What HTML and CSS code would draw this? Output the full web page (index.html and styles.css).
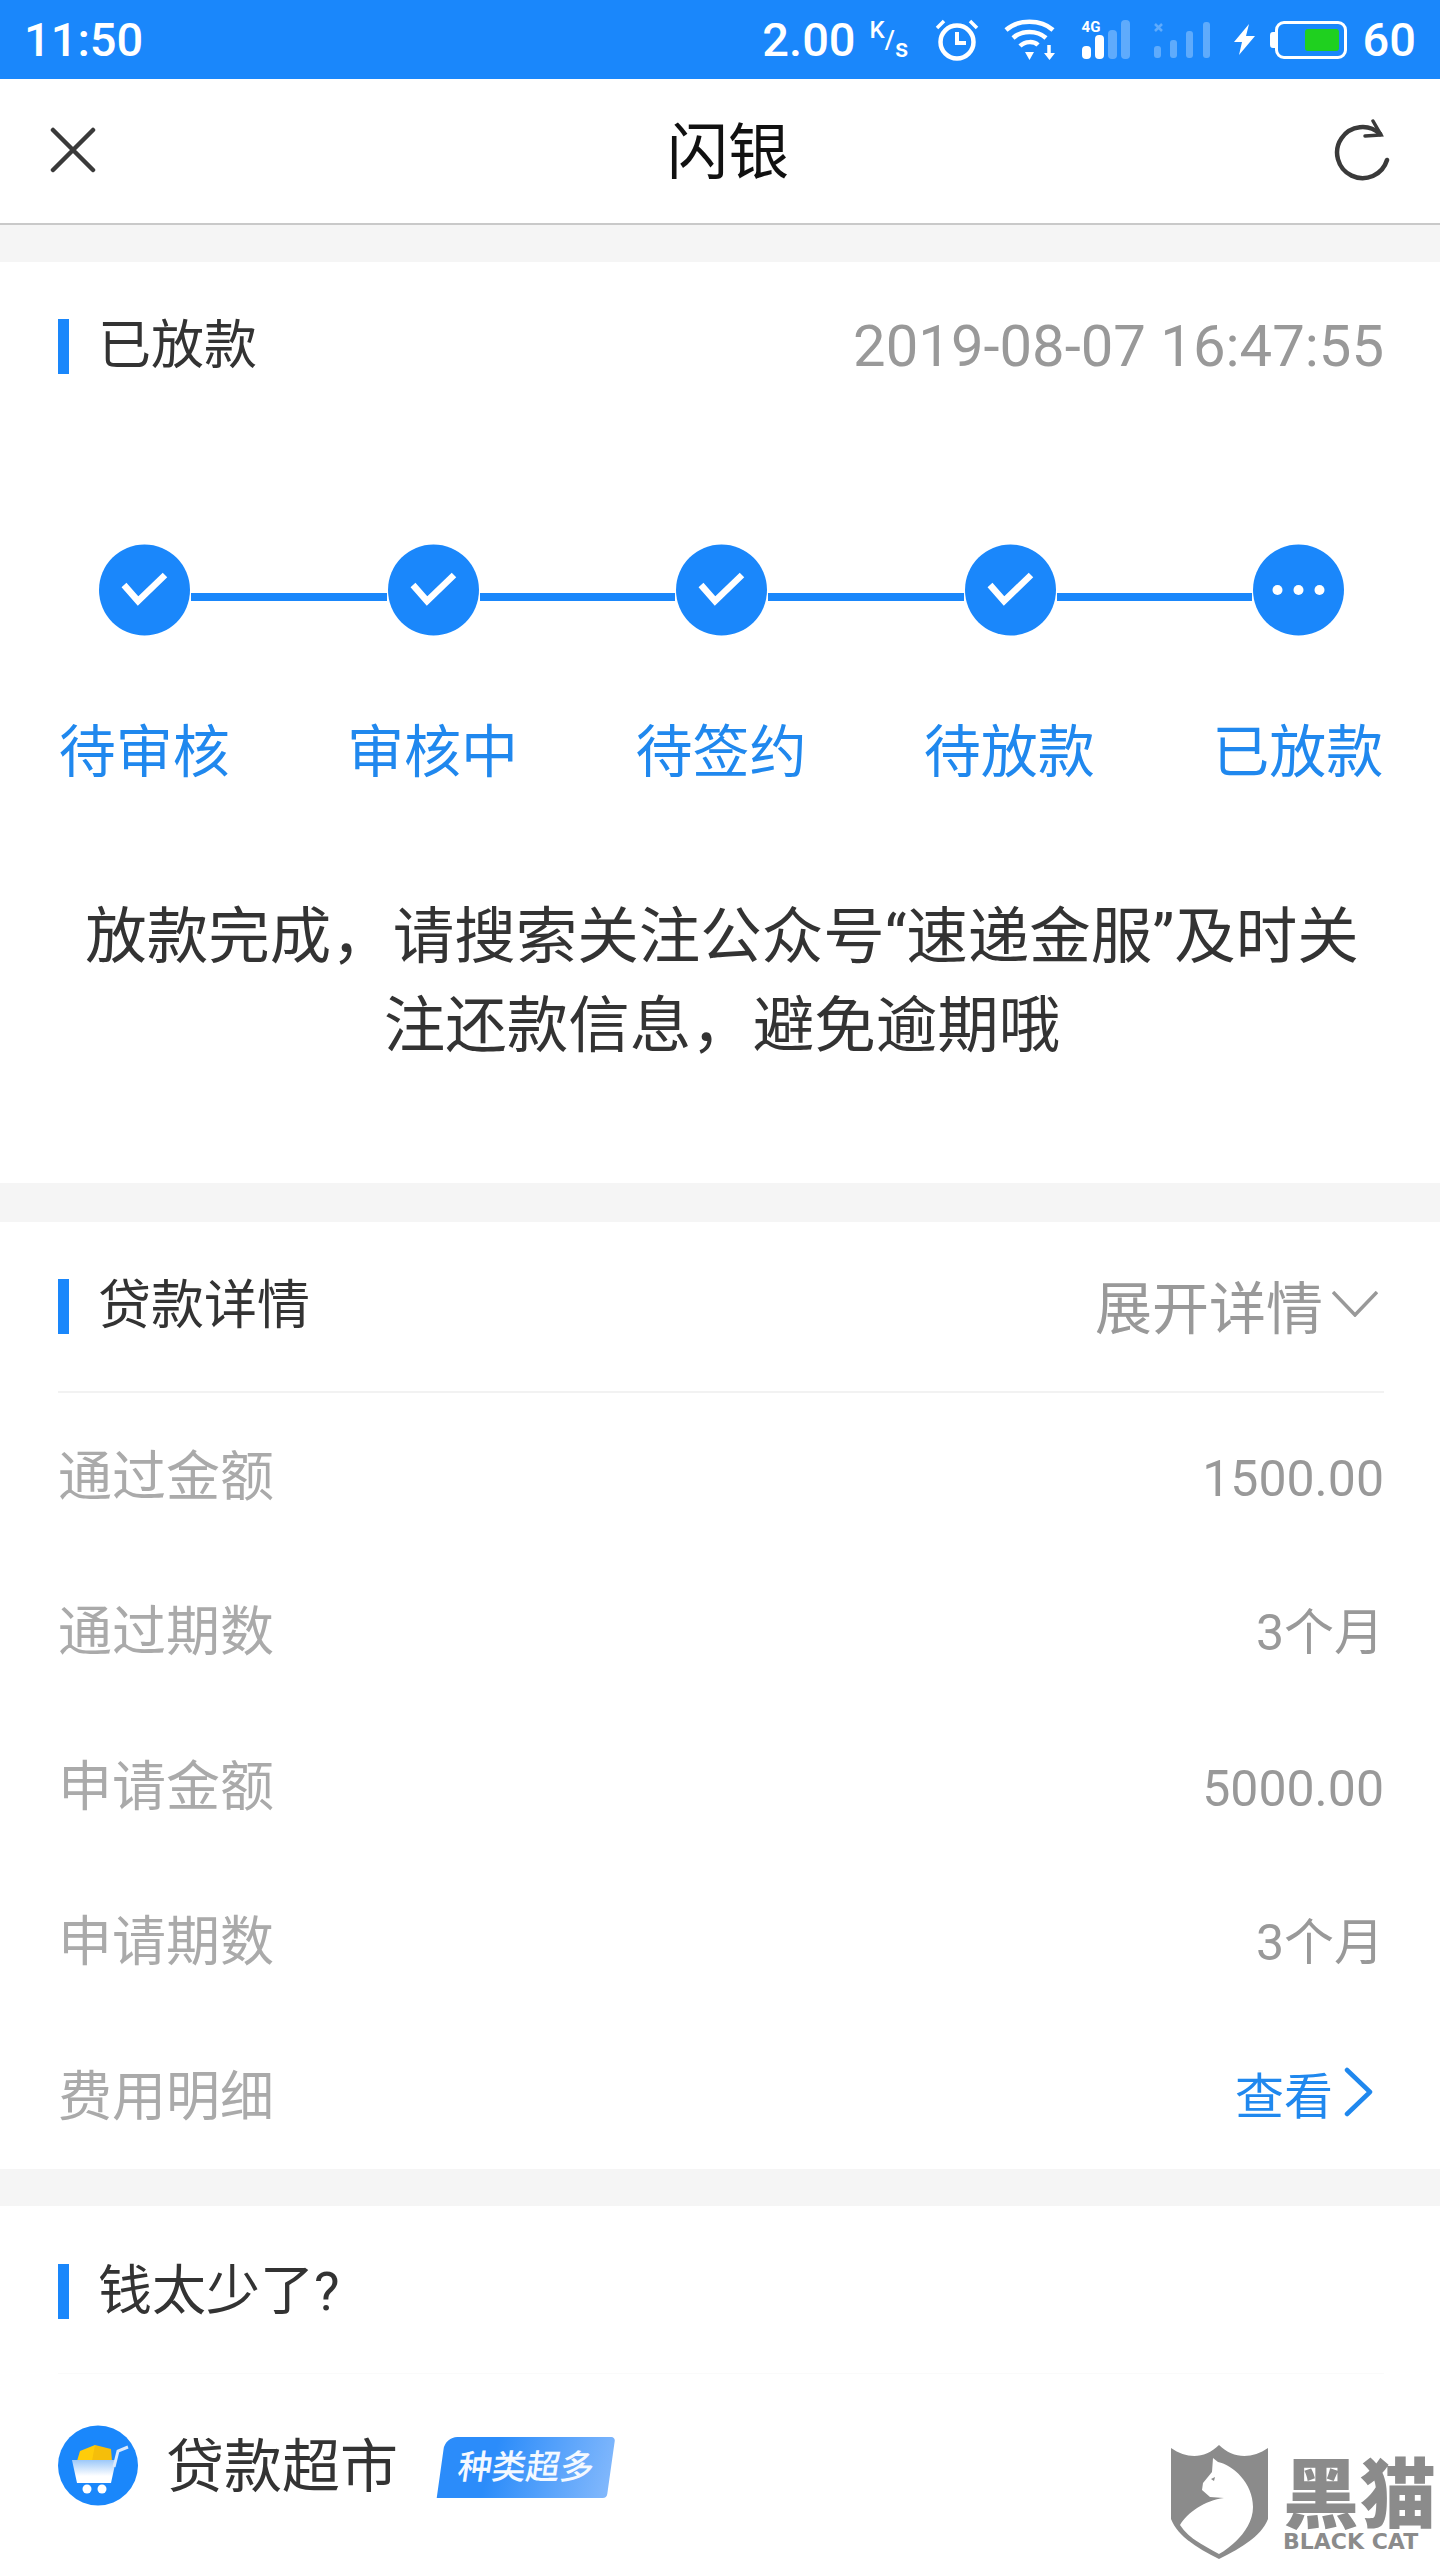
FILE: index.html
```html
<!DOCTYPE html>
<html lang="zh-CN">
<head>
  <meta charset="UTF-8">
  <meta name="viewport" content="width=device-width, initial-scale=1.0">
  <title>闪银</title>
  <link rel="stylesheet" href="styles.css">
</head>
<body>
  <div class="page">
    <!-- Status bar -->
    <div class="status-bar">
      <span class="clock">11:50</span>
      <div class="status-icons">
        <span class="speed">2.00</span>
        <span class="speed-unit"><sup>K</sup>/<sub>s</sub></span>
        <svg class="ic-alarm" width="44" height="42" viewBox="0 0 44 42" fill="none" stroke="#fff">
          <circle cx="22" cy="23" r="16.5" stroke-width="4.5"/>
          <path d="M22 13v11h9" stroke-width="4"/>
          <path d="M2 9 9 2M42 9 35 2" stroke-width="3.5"/>
        </svg>
        <svg class="ic-wifi" width="53" height="42" viewBox="0 0 53 42" fill="none" stroke="#fff" stroke-width="4.5">
          <path d="M2 11C14 0 37 0 49 11"/>
          <path d="M9 19C18 11 33 11 42 19"/>
          <path d="M16 27C21 22 30 22 34 26"/>
          <path d="M21 33h9l-4.5 8z" fill="#fff" stroke="none"/>
          <path d="M45 26v10" stroke-width="3.5"/>
          <path d="M40 34h11l-5.500 7z" fill="#fff" stroke="none"/>
        </svg>
        <div class="signal">
          <span class="net-label">4G</span>
          <i class="bar bar-dot"></i>
          <i class="bar bar-on"></i>
          <i class="bar bar-off bar-a"></i>
          <i class="bar bar-off bar-b"></i>
        </div>
        <svg class="ic-signal2" width="56" height="36" viewBox="0 0 56 36" fill="#fff" fill-opacity="0.3">
          <rect x="0" y="24" width="7" height="12" rx="3"/>
          <rect x="16" y="18" width="7" height="18" rx="3"/>
          <rect x="32" y="9" width="7" height="27" rx="3"/>
          <rect x="49" y="0" width="7" height="36" rx="3"/>
          <path d="M1 2 8 9M8 2 1 9" stroke="#fff" stroke-opacity="0.3" stroke-width="2.5"/>
        </svg>
        <svg class="ic-bolt" width="21" height="31" viewBox="0 0 21 31" fill="#fff">
          <path d="M15 0 0 18h8L5 31 21 12h-9z"/>
        </svg>
        <div class="battery"><div class="battery-fill"></div></div>
        <span class="battery-num">60</span>
      </div>
    </div>

    <!-- Nav bar -->
    <div class="nav-bar">
      <svg class="nav-close" width="46" height="46" viewBox="0 0 46 46" fill="none" stroke="#3a3a3a" stroke-width="4.5" stroke-linecap="round">
        <path d="M3 3 43 43M43 3 3 43"/>
      </svg>
      <div class="nav-title">闪银</div>
      <svg class="nav-refresh" width="56" height="62" viewBox="0 0 56 62" fill="none" stroke="#3a3a3a" stroke-width="4.5" stroke-linecap="round">
        <path d="M53 41A25.500 25.500 0 1 1 46 15"/>
        <path d="M39 2 47 16 31 17" stroke-width="3.5"/>
      </svg>
    </div>

    <div class="gap"></div>

    <!-- Progress -->
    <section class="card card-status">
      <div class="card-head">
        <h2 class="head-title">已放款</h2>
        <span class="head-date">2019-08-07 16:47:55</span>
      </div>
      <div class="track">
        <svg class="dot" viewBox="0 0 91 92"><circle cx="45.5" cy="46" r="45.5" fill="#1a87fb"/><path d="M25 41 39 57 66 31" fill="none" stroke="#fff" stroke-width="6.5"/></svg>
        <div class="track-line"></div>
        <svg class="dot" viewBox="0 0 91 92"><circle cx="45.5" cy="46" r="45.5" fill="#1a87fb"/><path d="M25 41 39 57 66 31" fill="none" stroke="#fff" stroke-width="6.5"/></svg>
        <div class="track-line"></div>
        <svg class="dot" viewBox="0 0 91 92"><circle cx="45.5" cy="46" r="45.5" fill="#1a87fb"/><path d="M25 41 39 57 66 31" fill="none" stroke="#fff" stroke-width="6.5"/></svg>
        <div class="track-line"></div>
        <svg class="dot" viewBox="0 0 91 92"><circle cx="45.5" cy="46" r="45.5" fill="#1a87fb"/><path d="M25 41 39 57 66 31" fill="none" stroke="#fff" stroke-width="6.5"/></svg>
        <div class="track-line"></div>
        <svg class="dot" viewBox="0 0 91 92"><circle cx="45.5" cy="46" r="45.5" fill="#1a87fb"/><circle cx="24.5" cy="46" r="5" fill="#fff"/><circle cx="45.5" cy="46" r="5" fill="#fff"/><circle cx="66.5" cy="46" r="5" fill="#fff"/></svg>
      </div>
      <div class="step-labels">
        <span>待审核</span>
        <span>审核中</span>
        <span>待签约</span>
        <span>待放款</span>
        <span>已放款</span>
      </div>
      <p class="status-msg">放款完成，请搜索关注公众号“速递金服”及时关<br>注还款信息，避免逾期哦</p>
    </section>

    <div class="gap gap-wide"></div>

    <!-- Loan details -->
    <section class="card card-detail">
      <div class="card-head head-line">
        <h2 class="head-title">贷款详情</h2>
        <span class="expand">展开详情
          <svg width="46" height="26" viewBox="0 0 46 26" fill="none" stroke="#999" stroke-width="3.5"><path d="M1 1 23 24 45 1"/></svg>
        </span>
      </div>
      <div class="row"><span class="row-label">通过金额</span><span class="row-value row-num">1500.00</span></div>
      <div class="row"><span class="row-label">通过期数</span><span class="row-value">3个月</span></div>
      <div class="row"><span class="row-label">申请金额</span><span class="row-value row-num">5000.00</span></div>
      <div class="row"><span class="row-label">申请期数</span><span class="row-value">3个月</span></div>
      <div class="row"><span class="row-label">费用明细</span>
        <span class="row-link">查看
          <svg width="29" height="50" viewBox="0 0 29 50" fill="none" stroke="#2088ee" stroke-width="4.5" stroke-linecap="round" stroke-linejoin="round"><path d="M3 3 26 25 3 47"/></svg>
        </span>
      </div>
    </section>

    <div class="gap"></div>

    <!-- Loan market -->
    <section class="card card-market">
      <div class="card-head head-faint">
        <h2 class="head-title">钱太少了?</h2>
      </div>
      <div class="market">
        <svg class="market-icon" width="80" height="81" viewBox="0 0 80 81">
          <defs>
            <linearGradient id="cart-fill" x1="0" y1="0" x2="0" y2="1">
              <stop offset="0" stop-color="#9cc8f9"/>
              <stop offset="0.7" stop-color="#fff"/>
            </linearGradient>
          </defs>
          <circle cx="40" cy="40.5" r="40" fill="#1a87fb"/>
          <path d="M19 36 22 26 37 20 45 36z" fill="#ffcc0a"/>
          <path d="M34 36 37 20 53 24 54 36z" fill="#f5be0a"/>
          <path d="M14 35H58L53 58H19z" fill="url(#cart-fill)"/>
          <path d="M56 42 60 26 70 22" fill="none" stroke="#dbe9fb" stroke-width="3"/>
          <circle cx="29" cy="64" r="4.5" fill="#fff"/>
          <circle cx="44" cy="64" r="4.5" fill="#fff"/>
        </svg>
        <span class="market-name">贷款超市</span>
        <span class="market-tag"><em>种类超多</em></span>
      </div>
    </section>

    <!-- Watermark -->
    <div class="watermark">
      <svg width="97" height="114" viewBox="0 0 97 114">
        <path d="M0 3C16 14 34 14 48 0 62 14 81 14 97 3V74C90 92 68 104 48 114 28 104 7 92 0 74z" fill="#8b8b8b"/>
        <path d="M42 13 47 17C62 20 82 38 82 62 82 82 64 100 48 109 34 101 18 94 9 80 16 68 34 55 53 53L39 52 31 45 32 38 41 27z" fill="#fff"/>
        <path d="M40 34 44 32 43 36z" fill="#8b8b8b"/>
      </svg>
      <div class="wm-text">
        <div class="wm-cn">黑猫</div>
        <div class="wm-en">BLACK CAT</div>
      </div>
    </div>
  </div>
</body>
</html>
```

FILE: styles.css
```css
* {
  box-sizing: border-box;
}

html,
body {
  margin: 0;
  padding: 0;
  background-color: #ffffff;
}

body {
  font-family: Roboto, "Noto Sans CJK SC", sans-serif;
  color: #333333;
}

.page {
  position: relative;
  width: 1440px;
  height: 2560px;
  overflow: hidden;
  background-color: #ffffff;
}

/* Status bar */
.status-bar {
  display: flex;
  justify-content: space-between;
  align-items: center;
  height: 79px;
  padding: 0 24px;
  background-color: #1a87fb;
  color: #ffffff;
}

.clock {
  font-size: 47px;
  font-weight: 500;
  line-height: 79px;
}

.status-icons {
  display: flex;
  align-items: center;
}

.speed {
  font-size: 47px;
  font-weight: 500;
  line-height: 79px;
}

.speed-unit {
  display: flex;
  width: 39px;
  margin-left: 14px;
  font-size: 26px;
  font-weight: 500;
  line-height: 26px;
}

.speed-unit sup {
  font-size: 24px;
  transform: translateY(-10px);
}

.speed-unit sub {
  font-size: 26px;
  transform: translateY(8px);
}

.ic-alarm {
  margin-left: 26px;
}

.ic-wifi {
  margin-left: 25px;
}

.signal {
  position: relative;
  display: flex;
  align-items: flex-end;
  gap: 4px;
  height: 39px;
  margin-left: 25px;
}

.net-label {
  position: absolute;
  left: 0;
  top: -1px;
  font-size: 15px;
  font-weight: 700;
  line-height: 16px;
}

.bar {
  display: block;
  width: 9px;
  border-radius: 4px;
}

.bar-dot {
  height: 13px;
  background-color: #ffffff;
}

.bar-on {
  height: 24px;
  background-color: #ffffff;
}

.bar-off {
  background-color: rgba(255, 255, 255, 0.3);
}

.bar-a {
  height: 29px;
}

.bar-b {
  height: 39px;
}

.ic-signal2 {
  margin-left: 24px;
}

.ic-bolt {
  margin-left: 24px;
}

.battery {
  position: relative;
  display: flex;
  justify-content: flex-end;
  width: 72px;
  height: 38px;
  margin-left: 20px;
  padding: 5px;
  border: 3px solid #ffffff;
  border-radius: 9px;
}

.battery::before {
  content: "";
  position: absolute;
  left: -8px;
  top: 8px;
  width: 5px;
  height: 16px;
  border-radius: 3px 0 0 3px;
  background-color: #ffffff;
}

.battery-fill {
  width: 34px;
  border-radius: 3px;
  background-color: #1fd01f;
}

.battery-num {
  margin-left: 16px;
  font-size: 47px;
  font-weight: 500;
  line-height: 79px;
}

/* Nav bar */
.nav-bar {
  display: grid;
  grid-template-columns: 1fr auto 1fr;
  align-items: center;
  height: 146px;
  padding: 0 50px 2px 50px;
  border-bottom: 2px solid #c9c9c9;
}

.nav-title {
  margin-left: 16px;
  padding-top: 6px;
  font-size: 61px;
  line-height: 80px;
  color: #111111;
}

.nav-refresh {
  justify-self: end;
}

.gap {
  height: 37px;
  background-color: #f5f5f5;
}

.gap-wide {
  height: 39px;
}

/* Cards */
.card {
  padding: 0 56px 0 58px;
  background-color: #ffffff;
}

.card-status {
  height: 921px;
  padding: 0;
}

.card-status .card-head {
  padding: 57px 56px 0 58px;
}

.card-head {
  display: flex;
  justify-content: space-between;
  align-items: center;
}

.head-title {
  margin: 0;
  padding-left: 29px;
  border-left: 11px solid #1a87fb;
  font-size: 53px;
  font-weight: 400;
  line-height: 55px;
}

.head-date {
  font-size: 58px;
  line-height: 55px;
  color: #999999;
}

/* Steps */
.track {
  display: flex;
  align-items: center;
  margin-top: 170px;
  padding: 0 96px 0 99px;
}

.dot {
  flex: none;
  width: 91px;
  height: 92px;
}

.track-line {
  flex: 1;
  height: 8px;
  margin: 14px 1px 0;
  background-color: #1a87fb;
}

.step-labels {
  display: grid;
  grid-template-columns: repeat(5, 288.4px);
  margin-top: 77px;
  font-size: 57px;
  line-height: 80px;
  text-align: center;
  color: #2088ee;
}

.status-msg {
  margin: 100px 0 0;
  padding-left: 4px;
  font-size: 61.5px;
  line-height: 89px;
  text-align: center;
}

/* Detail rows */
.card-detail {
  height: 947px;
}

.head-line {
  height: 171px;
  border-bottom: 2px solid #f2f2f2;
}

.card-detail .head-title {
  margin-top: -1px;
}

.expand {
  display: flex;
  align-items: center;
  gap: 9px;
  padding: 0 6px 6px 0;
  font-size: 57px;
  color: #999999;
}

.row {
  display: flex;
  justify-content: space-between;
  align-items: center;
  height: 155px;
}

.row-label {
  padding-top: 3px;
  font-size: 54px;
  color: #aaaaaa;
}

.row-value {
  padding-top: 4px;
  font-size: 50px;
  color: #999999;
}

.row-num {
  padding-top: 16px;
}

.row-link {
  display: flex;
  align-items: center;
  gap: 11px;
  padding: 3px 11px 0 0;
  font-size: 49px;
  color: #2088ee;
}

/* Market */
.head-faint {
  height: 168px;
  padding: 4px 0 0;
  border-bottom: 1px solid #fafafa;
}

.head-faint .head-title {
  font-size: 54px;
}

.market {
  display: flex;
  align-items: center;
  margin-top: 48px;
}

.market-name {
  margin-left: 28px;
  padding-top: 5px;
  font-size: 58px;
  line-height: 81px;
}

.market-tag {
  display: flex;
  justify-content: center;
  align-items: center;
  width: 170px;
  height: 61px;
  margin: 4px 0 0 43px;
  border-radius: 12px 4px 4px 0;
  background: linear-gradient(100deg, #2b8cfa 30%, #82b8fc);
  color: #f4f9ff;
  transform: skewX(-8deg);
}

.market-tag em {
  font-size: 34px;
  font-style: normal;
  font-weight: 500;
  line-height: 61px;
}

/* Watermark */
.watermark {
  position: absolute;
  left: 1171px;
  top: 2445px;
  display: flex;
  gap: 15px;
  color: #8b8b8b;
}

.wm-text {
  padding-top: 5px;
}

.wm-cn {
  font-family: "Noto Sans CJK SC", sans-serif;
  font-size: 76px;
  font-weight: 900;
  line-height: 78px;
  letter-spacing: 1px;
}

.wm-en {
  margin-top: 3px;
  font-family: "DejaVu Sans", sans-serif;
  font-size: 22px;
  font-weight: 700;
  line-height: 22px;
  white-space: nowrap;
}
```
